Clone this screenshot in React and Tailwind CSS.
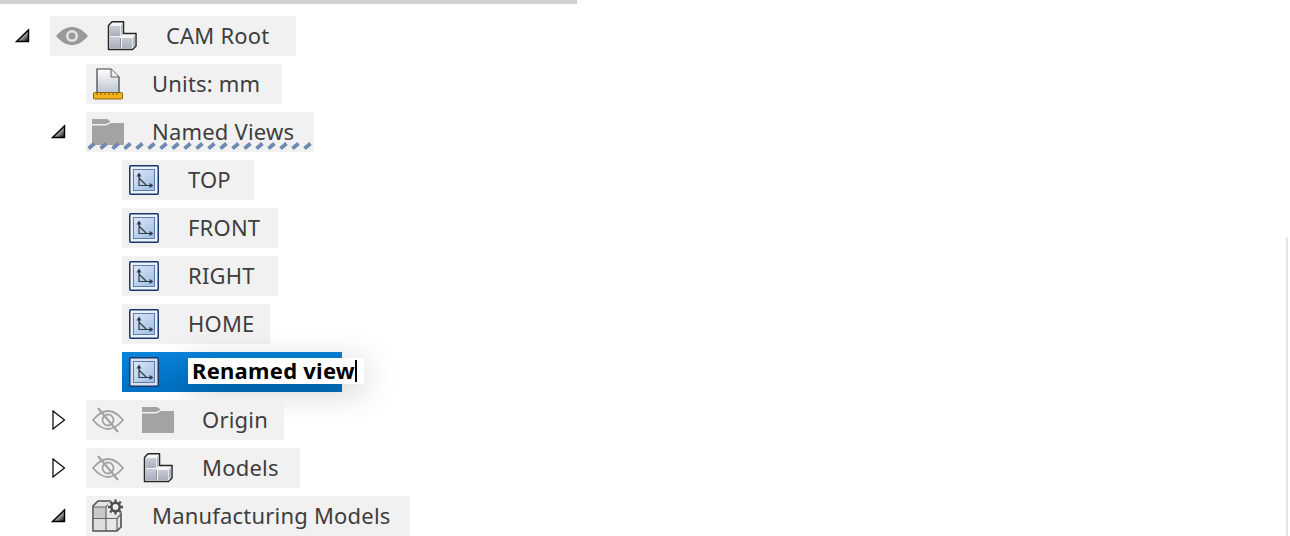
const Expanded = () => (
  <svg width="16" height="16" viewBox="0 0 16 16">
    <defs>
      <linearGradient id="arrowFill" x1="0.3" y1="0.3" x2="1" y2="1">
        <stop offset="0" stopColor="#f4f4f4" />
        <stop offset="0.45" stopColor="#8c8c8c" />
        <stop offset="1" stopColor="#050505" />
      </linearGradient>
    </defs>
    <path d="M1.5 13.5 L13.5 2 V13.5 Z" fill="url(#arrowFill)" stroke="#000" strokeWidth="1.4" />
  </svg>
);

const Collapsed = () => (
  <svg width="16" height="20" viewBox="0 0 16 20">
    <path d="M2 1 L13.5 10 L2 19 Z" fill="#fff" stroke="#000" strokeWidth="1.2" />
  </svg>
);

const Eye = () => (
  <svg width="32" height="18" viewBox="0 0 32 18">
    <path d="M0 9 C6 2 11 0 16 0 C21 0 26 2 32 9 C26 16 21 18 16 18 C11 18 6 16 0 9 Z" fill="#9a9a9a" />
    <circle cx="16" cy="9" r="6" fill="#e6e6e6" />
    <circle cx="16" cy="9" r="3.6" fill="#9a9a9a" />
  </svg>
);

const EyeOff = () => (
  <svg width="32" height="28" viewBox="0 0 32 28" fill="none" stroke="#a3a3a3">
    <path d="M1 14 C7 7 12 5 16 5 C20 5 25 7 31 14 C25 21 20 23 16 23 C12 23 7 21 1 14 Z" strokeWidth="1.8" />
    <circle cx="16" cy="14" r="5.5" strokeWidth="1.8" />
    <path d="M6 2 L26 26" strokeWidth="2.2" />
  </svg>
);

const Cubes = () => (
  <svg width="30" height="30" viewBox="0 0 30 30">
    <defs>
      <linearGradient id="cubeFill" x1="0" y1="0" x2="0" y2="1">
        <stop offset="0" stopColor="#c9ccd5" />
        <stop offset="1" stopColor="#a9aebb" />
      </linearGradient>
    </defs>
    <path d="M1.5 4.5 L5 0.8 H16.5 V12.5 H29 V25 L25.5 28.5 H1.5 Z" fill="#f4f5f7" stroke="#262626" strokeWidth="1.5" strokeLinejoin="round" />
    <rect x="2.5" y="5" width="10.5" height="10" fill="url(#cubeFill)" />
    <rect x="2.5" y="16" width="10.5" height="11.5" fill="url(#cubeFill)" />
    <rect x="15" y="17" width="10" height="10.5" fill="url(#cubeFill)" />
    <path d="M13.8 5 L15.8 2.5 V13 L13.8 15 Z M25.8 17 L28.2 14 V24.5 L25.8 27.5 Z" fill="#b3b7c1" />
    <path d="M13.5 27.5 V17" stroke="#8e929c" strokeWidth="1" />
  </svg>
);

const UnitsFile = () => (
  <svg width="30" height="32" viewBox="0 0 30 32">
    <defs>
      <linearGradient id="fileFill" x1="0" y1="0" x2="0" y2="1">
        <stop offset="0" stopColor="#ffffff" />
        <stop offset="1" stopColor="#b9c0cf" />
      </linearGradient>
    </defs>
    <path d="M4 1 H18 L26 9 V26 H4 Z" fill="url(#fileFill)" stroke="#3e3e3e" strokeWidth="1.2" />
    <path d="M18 1 V9 H26" fill="#eceef2" stroke="#5c5c5c" strokeWidth="1" />
    <rect x="0.5" y="24.5" width="29" height="6.5" rx="1" fill="#f2b21c" stroke="#8a6410" />
    <path d="M4 25 V27 M8 25 V27 M12 25 V27 M16 25 V27 M20 25 V27 M24 25 V27" stroke="#7a5a10" strokeWidth="1" />
  </svg>
);

const Folder = () => (
  <svg width="32" height="26" viewBox="0 0 32 26">
    <path d="M0 0 H15 L18 2 V4 H32 V26 H0 Z" fill="#a3a3a3" />
    <path d="M0 5 H14 L19 2.5 H32 V4 H19 L14 6.5 H0 Z" fill="#f1f1f1" />
  </svg>
);

const ViewIcon = ({ selected }) => (
  <svg width="30" height="30" viewBox="0 0 30 30">
    <defs>
      <linearGradient id="viewFill" x1="0" y1="0" x2="1" y2="1">
        <stop offset="0" stopColor="#dfe8f5" />
        <stop offset="1" stopColor="#9fbce2" />
      </linearGradient>
    </defs>
    <rect x="0.75" y="0.75" width="28.5" height="28.5" rx="1" fill={selected ? "#d6e2f2" : "#e9f0f9"} stroke="#1f3768" strokeWidth="1.5" />
    <rect x="4.5" y="4.5" width="21" height="21" fill="url(#viewFill)" stroke="#5a7db0" strokeWidth="1" />
    <path d="M10 10 V20.5 H21 M10 13 L17.5 20.5" fill="none" stroke="#2f3a48" strokeWidth="1.2" />
    <path d="M10 7.5 L7.5 11.5 H12.5 Z M24.5 20.5 L20.5 18 V23 Z" fill="#2f3a48" />
  </svg>
);

const MfgModel = () => (
  <svg width="34" height="34" viewBox="0 0 34 34">
    <path d="M2 7 L7 2 H20 L30 12 V28 L26 32 H2 Z" fill="#e4e4e4" stroke="#4f4f4f" strokeWidth="1.6" strokeLinejoin="round" />
    <path d="M2.8 8 H15 V19 H2.8 Z" fill="#c9c9c9" />
    <path d="M2.8 20 H15 V31 H2.8 Z" fill="#dedede" />
    <path d="M16 20 H26 V31 H16 Z" fill="#e6e6e6" />
    <path d="M2 8 H15 L20 2 M15 8 V32 M2 19.5 H26 M26 19.5 L30 15 M26 19.5 V32" fill="none" stroke="#666" strokeWidth="1.2" />
    <circle cx="24.5" cy="8" r="8" fill="#f1f1f1" />
    <circle cx="24.5" cy="8" r="4.2" fill="#f1f1f1" stroke="#4f4f4f" strokeWidth="2.6" />
    <path d="M24.5 0.5 V3 M24.5 13 V15.5 M17 8 H19.5 M29.5 8 H32 M19.2 2.7 L21 4.5 M28 11.5 L29.8 13.3 M29.8 2.7 L28 4.5 M21 11.5 L19.2 13.3" stroke="#4f4f4f" strokeWidth="2.4" />
  </svg>
);

const rows = [
  { depth: 0, toggle: "open", eye: "on", icon: <Cubes />, label: "CAM Root", width: "w-[246px]" },
  { depth: 1, icon: <UnitsFile />, label: "Units: mm", width: "w-[196px]" },
  { depth: 1, toggle: "open", icon: <Folder />, label: "Named Views", width: "w-[228px]", drop: true },
  { depth: 2, icon: <ViewIcon />, label: "TOP", width: "w-[132px]" },
  { depth: 2, icon: <ViewIcon />, label: "FRONT", width: "w-[156px]" },
  { depth: 2, icon: <ViewIcon />, label: "RIGHT", width: "w-[156px]" },
  { depth: 2, icon: <ViewIcon />, label: "HOME", width: "w-[148px]" },
  { depth: 2, icon: <ViewIcon selected />, label: "Renamed view", width: "w-[220px]", editing: true },
  { depth: 1, toggle: "closed", eye: "off", icon: <Folder />, label: "Origin", width: "w-[198px]" },
  { depth: 1, toggle: "closed", eye: "off", icon: <Cubes />, label: "Models", width: "w-[214px]" },
  { depth: 1, toggle: "open", icon: <MfgModel />, label: "Manufacturing Models", width: "w-[324px]" },
];

const indents = ["ml-[14px]", "ml-[50px]", "ml-[86px]"];

const Row = ({ row }) => (
  <div className={`flex h-10 shrink-0 items-center ${indents[row.depth]}`}>
    <div className="flex w-[36px] shrink-0 items-center pl-[1px]">
      {row.toggle === "open" && <Expanded />}
      {row.toggle === "closed" && <Collapsed />}
    </div>
    <div
      className={`relative flex h-10 items-center ${row.width} ${
        row.editing ? "bg-gradient-to-b from-[#0a84dc] to-[#0070c1]" : "bg-[#f1f1f1]"
      }`}
    >
      {row.eye && (
        <div className="flex w-[50px] shrink-0 justify-center pr-[6px]">
          {row.eye === "on" ? <Eye /> : <EyeOff />}
        </div>
      )}
      <div className="flex w-[44px] shrink-0 justify-center">{row.icon}</div>
      {row.editing ? (
        <div className="mb-[2px] ml-[22px] flex h-[26px] w-[176px] shrink-0 items-center whitespace-nowrap bg-white pb-[2px] pl-1 font-bold tracking-[0.25px] text-black shadow-[0_6px_34px_rgba(0,0,0,0.22)]">
          <span>{row.label}</span>
          <span className="mt-[2px] h-[22px] w-[2px] shrink-0 bg-black" />
        </div>
      ) : (
        <span className="ml-[22px] whitespace-nowrap pb-[2px] text-[#3e3e3e]">{row.label}</span>
      )}
      {row.drop && (
        <svg className="absolute bottom-[2px] left-0" width="228" height="8">
          <defs>
            <pattern id="dropDash" width="12" height="8" patternUnits="userSpaceOnUse">
              <path d="M2.5 6.5 L8.5 1.5" stroke="#7089b2" strokeWidth="3.8" />
            </pattern>
          </defs>
          <rect width="228" height="8" fill="url(#dropDash)" />
        </svg>
      )}
    </div>
  </div>
);

export default function App() {
  return (
    <div className="relative flex h-[536px] w-[1290px] flex-col overflow-hidden bg-white font-['Noto_Sans',sans-serif] text-[22px] tracking-[0.2px]">
      <div className="h-[4px] w-[577px] shrink-0 bg-[#d0d0d0]" />
      <div className="flex flex-col gap-2 pt-3">
        {rows.map((row) => (
          <Row key={row.label} row={row} />
        ))}
      </div>
      <div className="absolute right-[2px] top-[237px] bottom-0 w-[2px] bg-[#e4e6e0]" />
    </div>
  );
}
